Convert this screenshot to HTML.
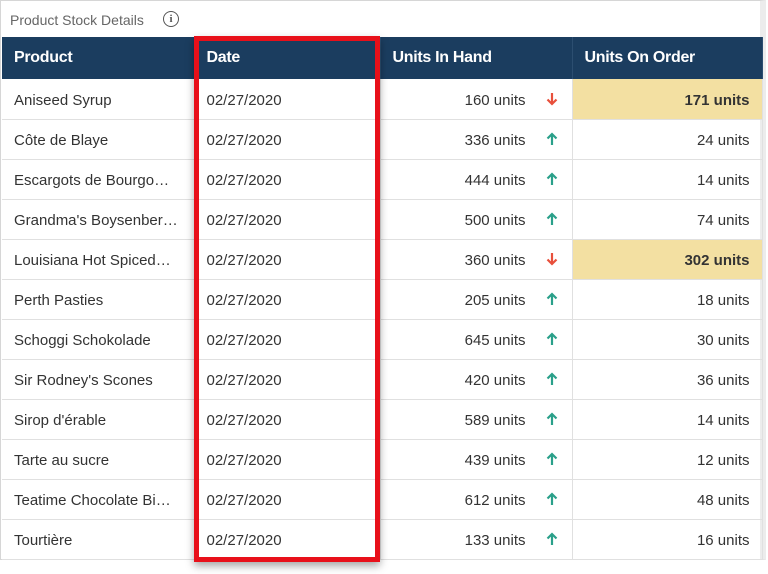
<!DOCTYPE html><html><head><style>
body{margin:0;width:768px;height:574px;background:#fff;font-family:"Liberation Sans",sans-serif;position:relative;overflow:hidden}
.frame{position:absolute;left:0;top:0;width:766px;height:560px;border:1px solid #d6d6d6;border-right:6px solid #ececec;box-sizing:border-box;background:#fff}
.title{position:absolute;left:10px;top:12px;font-size:14px;color:#666}
.info{position:absolute;left:163px;top:11px;width:14px;height:14px;border:1.5px solid #555;border-radius:50%;font-size:11px;font-weight:bold;color:#555;text-align:center;line-height:14px;font-family:"Liberation Serif",serif}
table{position:absolute;left:2px;top:37px;border-collapse:collapse;width:760px;table-layout:fixed}
th{background:#1b3d5f;color:#fff;font-size:16px;font-weight:bold;text-align:left;height:42px;padding:0 0 0 12px;border-right:1px solid #2c4e70;letter-spacing:-0.3px}
tr.d{height:40px}
td{height:36px;padding:3px 12px 0;line-height:17px;border-bottom:1px solid #e0e0e0;border-right:1px solid #e0e0e0;font-size:15px;color:#333;white-space:nowrap;overflow:hidden;box-sizing:border-box}
td.r{text-align:right}
td.u{padding-right:14px}
td.hl{background:#f3e0a2;font-weight:bold}
svg.a{margin-left:20px;vertical-align:-1px;display:inline-block}
.red{position:absolute;left:194px;top:36px;width:186px;height:526px;border:5px solid #e8101a;box-sizing:border-box;box-shadow:0 4px 8px rgba(0,0,0,.35)}
</style></head><body>
<div class="frame"></div>
<div class="title">Product Stock Details</div><div class="info">i</div>
<svg width="0" height="0" style="position:absolute"><defs>
<symbol id="up" viewBox="0 0 12 14"><path d="M6 13V2M1.5 6.5L6 2l4.5 4.5" fill="none" stroke="#2aa08a" stroke-width="2.2"/></symbol>
<symbol id="dn" viewBox="0 0 12 14"><path d="M6 1v11M1.5 7.5L6 12l4.5-4.5" fill="none" stroke="#e8503c" stroke-width="2.2"/></symbol>
</defs></svg>
<table>
<colgroup><col style="width:192px"><col style="width:186px"><col style="width:192px"><col style="width:190px"></colgroup>
<tr><th>Product</th><th>Date</th><th>Units In Hand</th><th>Units On Order</th></tr>
<tr class="d"><td>Aniseed Syrup</td><td>02/27/2020</td><td class="r u">160 units<svg class="a" width="12" height="14"><use href="#dn"/></svg></td><td class="r hl">171 units</td></tr>
<tr class="d"><td>Côte de Blaye</td><td>02/27/2020</td><td class="r u">336 units<svg class="a" width="12" height="14"><use href="#up"/></svg></td><td class="r">24 units</td></tr>
<tr class="d"><td>Escargots de Bourgo…</td><td>02/27/2020</td><td class="r u">444 units<svg class="a" width="12" height="14"><use href="#up"/></svg></td><td class="r">14 units</td></tr>
<tr class="d"><td>Grandma's Boysenber…</td><td>02/27/2020</td><td class="r u">500 units<svg class="a" width="12" height="14"><use href="#up"/></svg></td><td class="r">74 units</td></tr>
<tr class="d"><td>Louisiana Hot Spiced…</td><td>02/27/2020</td><td class="r u">360 units<svg class="a" width="12" height="14"><use href="#dn"/></svg></td><td class="r hl">302 units</td></tr>
<tr class="d"><td>Perth Pasties</td><td>02/27/2020</td><td class="r u">205 units<svg class="a" width="12" height="14"><use href="#up"/></svg></td><td class="r">18 units</td></tr>
<tr class="d"><td>Schoggi Schokolade</td><td>02/27/2020</td><td class="r u">645 units<svg class="a" width="12" height="14"><use href="#up"/></svg></td><td class="r">30 units</td></tr>
<tr class="d"><td>Sir Rodney's Scones</td><td>02/27/2020</td><td class="r u">420 units<svg class="a" width="12" height="14"><use href="#up"/></svg></td><td class="r">36 units</td></tr>
<tr class="d"><td>Sirop d'érable</td><td>02/27/2020</td><td class="r u">589 units<svg class="a" width="12" height="14"><use href="#up"/></svg></td><td class="r">14 units</td></tr>
<tr class="d"><td>Tarte au sucre</td><td>02/27/2020</td><td class="r u">439 units<svg class="a" width="12" height="14"><use href="#up"/></svg></td><td class="r">12 units</td></tr>
<tr class="d"><td>Teatime Chocolate Bi…</td><td>02/27/2020</td><td class="r u">612 units<svg class="a" width="12" height="14"><use href="#up"/></svg></td><td class="r">48 units</td></tr>
<tr class="d"><td>Tourtière</td><td>02/27/2020</td><td class="r u">133 units<svg class="a" width="12" height="14"><use href="#up"/></svg></td><td class="r">16 units</td></tr>
</table>
<div class="red"></div>
</body></html>
